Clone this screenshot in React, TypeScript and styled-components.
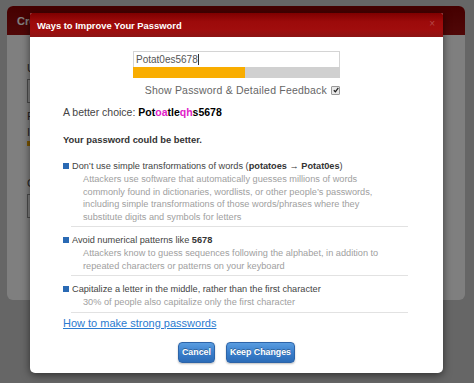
import React, { FC } from 'react'
import styled, { createGlobalStyle } from 'styled-components'

const GlobalStyle = createGlobalStyle`
  html, body {
    margin: 0;
    padding: 0;
    background: #cdcdcd;
    font-family: 'Liberation Sans', Arial, sans-serif;
  }
`

const StyledPage = styled.div`
  position: relative;
  height: 383px;
  padding: 6px 9px 0 7px;
  box-sizing: border-box;
  overflow: hidden;
`

const StyledBackDialog = styled.div`
  height: 294px;
  background: #fff;
  border-radius: 6px;
  overflow: hidden;
`

const StyledBackHeader = styled.div`
  height: 29px;
  background: linear-gradient(#8a0000, #a11010);
  color: #fff;
  font-size: 11px;
  font-weight: bold;
  line-height: 30px;
  padding-left: 10px;
`

const StyledBackBody = styled.div`
  display: flex;
  flex-direction: column;
  padding: 18px 20px;
  color: #444;
  font-size: 11px;
`

const StyledBackLabel = styled.div<{ gap: number }>`
  margin-top: ${p => p.gap}px;
  line-height: 14px;
`

const StyledBackInput = styled.div`
  height: 22px;
  width: 200px;
  border: 1px solid #999;
  margin-top: 4px;
`

const StyledBackBar = styled.div`
  height: 5px;
  width: 120px;
  background: #f9ad00;
  margin-top: 2px;
`

const StyledOverlay = styled.div`
  position: absolute;
  inset: 0;
  background: rgba(0, 0, 0, 0.5);
`

const StyledModal = styled.div`
  position: absolute;
  left: 30px;
  top: 13px;
  width: 413px;
  height: 360px;
  background: #fff;
  border-radius: 2px 2px 5px 5px;
  box-shadow: 0 2px 8px rgba(0, 0, 0, 0.55);
  display: flex;
  flex-direction: column;
`

const StyledModalHeader = styled.div`
  position: relative;
  height: 24px;
  display: flex;
  align-items: center;
  padding-left: 7px;
  background: linear-gradient(#7e0000, #9c0a0a 35%, #a00d0d 70%, #8c1414);
  color: #fff;
  font-size: 9.4px;
  font-weight: bold;
  border-radius: 2px 2px 0 0;
`

const StyledClose = styled.span`
  position: absolute;
  right: 8px;
  top: 5px;
  color: #b54848;
  font-size: 10px;
  font-weight: normal;
`

const StyledModalBody = styled.div`
  display: flex;
  flex-direction: column;
  padding: 0 35px 0 33px;
`

const StyledPasswordBlock = styled.div`
  align-self: center;
  width: 207px;
  margin-top: 14px;
  margin-left: 2px;
  display: flex;
  flex-direction: column;
`

const StyledInput = styled.div`
  height: 16px;
  box-sizing: border-box;
  border: 1px solid #d4d4d4;
  border-bottom: none;
  font-size: 10px;
  line-height: 15px;
  padding-left: 2px;
  color: #555;
`

const StyledCaret = styled.span`
  display: inline-block;
  width: 1px;
  height: 11px;
  background: #333;
  vertical-align: -2px;
`

const StyledBar = styled.div`
  height: 11px;
  background: #d0d0d0;
  display: flex;
`

const StyledBarFill = styled.div`
  background: #f9ad00;
`

const StyledFeedbackRow = styled.label`
  margin-top: 6px;
  align-self: flex-end;
  display: flex;
  align-items: center;
  gap: 4px;
  font-size: 10.5px;
  line-height: 12px;
  color: #666;
  letter-spacing: 0.2px;
`

const StyledCheck = styled.span`
  width: 7px;
  height: 7px;
  border: 1px solid #999;
  background: #e8e8e8;
  border-radius: 1px;
  display: flex;
  align-items: center;
  justify-content: center;
`

const StyledBetter = styled.div`
  margin-top: 9px;
  font-size: 10.5px;
  line-height: 14px;
  color: #444;
`

const StyledBetterValue = styled.span`
  color: #000;
  font-weight: bold;
`

const StyledChanged = styled.span`
  color: #e020c8;
`

const StyledHeading = styled.div`
  margin-top: 14px;
  font-size: 9.4px;
  font-weight: bold;
  line-height: 14px;
  color: #333;
`

const StyledList = styled.div`
  margin-top: 6px;
  display: flex;
  flex-direction: column;
`

const StyledItem = styled.div`
  display: flex;
  align-items: flex-start;
  padding-top: 7px;
`

const StyledMarker = styled.span`
  width: 6px;
  height: 6px;
  margin-top: 3px;
  margin-right: 2px;
  background: #2a6ab4;
  flex-shrink: 0;
`

const StyledItemText = styled.div`
  flex: 1;
  border-bottom: 1px solid #e2e2e2;
  padding-bottom: 3px;
`

const StyledItemTitle = styled.div`
  font-size: 9.2px;
  line-height: 13px;
  color: #444;
  padding-left: 1px;
`

const StyledItemDesc = styled.div`
  font-size: 9.2px;
  line-height: 12.5px;
  color: #a0a0a0;
  padding-left: 12px;
`

const StyledStrong = styled.b`
  color: #333;
`

const StyledLink = styled.a`
  margin-top: 3px;
  font-size: 11px;
  line-height: 14px;
  color: #2a7bd0;
  text-decoration: underline;
  align-self: flex-start;
`

const StyledButtons = styled.div`
  margin-top: 12px;
  display: flex;
  justify-content: center;
  gap: 11px;
  padding-left: 2px;
`

const StyledButton = styled.button`
  height: 21px;
  padding: 0 3px;
  border: 1px solid #2d64a8;
  border-radius: 4px;
  background: linear-gradient(#5a9de0, #3a7fcc 50%, #2c6cb8);
  color: #fff;
  font-family: 'Liberation Sans', Arial, sans-serif;
  font-size: 8.8px;
  font-weight: bold;
  text-shadow: 0 -1px 0 rgba(0, 0, 0, 0.3);
  box-shadow: 0 1px 2px rgba(0, 0, 0, 0.25);
`

type Tip = {
  title: React.ReactNode
  desc: string[]
}

const tips: Tip[] = [
  {
    title: (
      <>
        Don’t use simple transformations of words (
        <StyledStrong>potatoes → Potat0es</StyledStrong>)
      </>
    ),
    desc: [
      'Attackers use software that automatically guesses millions of words',
      'commonly found in dictionaries, wordlists, or other people’s passwords,',
      'including simple transformations of those words/phrases where they',
      'substitute digits and symbols for letters',
    ],
  },
  {
    title: (
      <>
        Avoid numerical patterns like <StyledStrong>5678</StyledStrong>
      </>
    ),
    desc: [
      'Attackers know to guess sequences following the alphabet, in addition to',
      'repeated characters or patterns on your keyboard',
    ],
  },
  {
    title: 'Capitalize a letter in the middle, rather than the first character',
    desc: ['30% of people also capitalize only the first character'],
  },
]

const CheckMark: FC = () => (
  <svg width="6" height="6" viewBox="0 0 6 6">
    <path d="M0.8 3.2 L2.4 4.8 L5.3 0.9" stroke="#222" strokeWidth="1.3" fill="none" />
  </svg>
)

const App: FC = () => (
  <>
    <GlobalStyle />
    <StyledPage>
      <StyledBackDialog>
        <StyledBackHeader>Create Account</StyledBackHeader>
        <StyledBackBody>
          <StyledBackLabel gap={8}>Username</StyledBackLabel>
          <StyledBackInput />
          <StyledBackLabel gap={6}>Password</StyledBackLabel>
          <StyledBackLabel gap={2}>Identify</StyledBackLabel>
          <StyledBackBar />
          <StyledBackLabel gap={30}>Confirm</StyledBackLabel>
          <StyledBackInput />
        </StyledBackBody>
      </StyledBackDialog>
      <StyledOverlay />
      <StyledModal>
        <StyledModalHeader>
          Ways to Improve Your Password
          <StyledClose>×</StyledClose>
        </StyledModalHeader>
        <StyledModalBody>
          <StyledPasswordBlock>
            <StyledInput>
              Potat0es5678
              <StyledCaret />
            </StyledInput>
            <StyledBar>
              <StyledBarFill style={{ width: '54%' }} />
            </StyledBar>
            <StyledFeedbackRow>
              Show Password &amp; Detailed Feedback
              <StyledCheck>
                <CheckMark />
              </StyledCheck>
            </StyledFeedbackRow>
          </StyledPasswordBlock>
          <StyledBetter>
            A better choice:{' '}
            <StyledBetterValue>
              Pot<StyledChanged>oa</StyledChanged>tle<StyledChanged>qh</StyledChanged>s5678
            </StyledBetterValue>
          </StyledBetter>
          <StyledHeading>Your password could be better.</StyledHeading>
          <StyledList>
            {tips.map((tip, index) => (
              <StyledItem key={index}>
                <StyledMarker />
                <StyledItemText>
                  <StyledItemTitle>{tip.title}</StyledItemTitle>
                  {tip.desc.map(line => (
                    <StyledItemDesc key={line}>{line}</StyledItemDesc>
                  ))}
                </StyledItemText>
              </StyledItem>
            ))}
          </StyledList>
          <StyledLink href="#">How to make strong passwords</StyledLink>
          <StyledButtons>
            <StyledButton>Cancel</StyledButton>
            <StyledButton>Keep Changes</StyledButton>
          </StyledButtons>
        </StyledModalBody>
      </StyledModal>
    </StyledPage>
  </>
)

export default App
